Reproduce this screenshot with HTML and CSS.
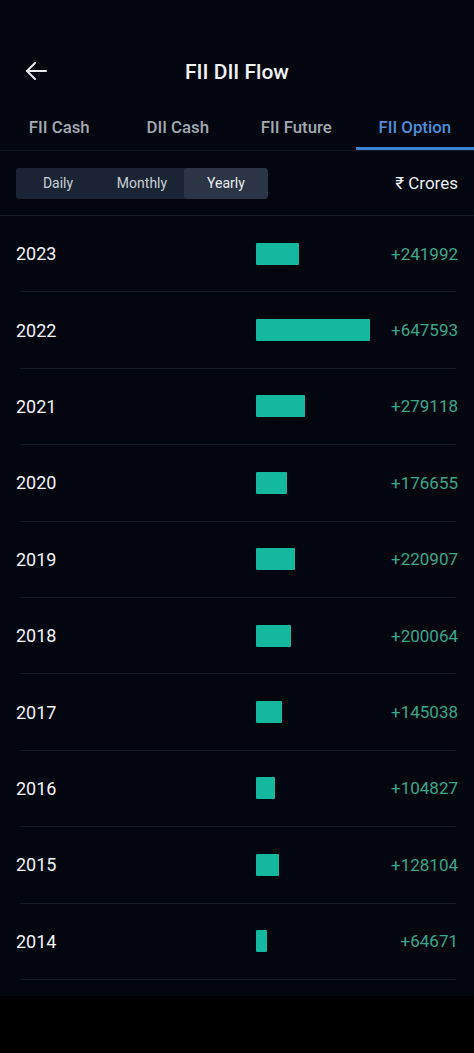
FILE: index.html
```html
<!DOCTYPE html>
<html lang="en">
<head>
  <meta charset="UTF-8" />
  <meta name="viewport" content="width=device-width, initial-scale=1.0" />
  <title>FII DII Flow</title>
  <link rel="stylesheet" href="styles.css">
</head>
<body>
  <div class="page">
    <header class="topbar">
      <button class="back" aria-label="Back">
        <svg width="22" height="20" viewBox="0 0 22 20" fill="none" stroke="#e8ebef" stroke-width="2" stroke-linecap="round" stroke-linejoin="round">
          <path d="M21 10H2" />
          <path d="M10 2L2 10l8 8" />
        </svg>
      </button>
      <h1>FII DII Flow</h1>
    </header>

    <nav class="tabs">
      <a href="#">FII Cash</a>
      <a href="#">DII Cash</a>
      <a href="#">FII Future</a>
      <a href="#" class="active">FII Option</a>
    </nav>

    <div class="toolbar">
      <div class="segments">
        <span>Daily</span>
        <span>Monthly</span>
        <span class="selected">Yearly</span>
      </div>
      <div class="unit">₹ Crores</div>
    </div>

    <main class="list">
      <div class="row"><div class="cells"><span class="year">2023</span><span class="track"><i class="bar" style="width: 42.6px"></i></span><span class="value">+241992</span></div></div>
      <div class="row"><div class="cells"><span class="year">2022</span><span class="track"><i class="bar" style="width: 114px"></i></span><span class="value">+647593</span></div></div>
      <div class="row"><div class="cells"><span class="year">2021</span><span class="track"><i class="bar" style="width: 49.1px"></i></span><span class="value">+279118</span></div></div>
      <div class="row"><div class="cells"><span class="year">2020</span><span class="track"><i class="bar" style="width: 31.1px"></i></span><span class="value">+176655</span></div></div>
      <div class="row"><div class="cells"><span class="year">2019</span><span class="track"><i class="bar" style="width: 38.9px"></i></span><span class="value">+220907</span></div></div>
      <div class="row"><div class="cells"><span class="year">2018</span><span class="track"><i class="bar" style="width: 35.2px"></i></span><span class="value">+200064</span></div></div>
      <div class="row"><div class="cells"><span class="year">2017</span><span class="track"><i class="bar" style="width: 25.5px"></i></span><span class="value">+145038</span></div></div>
      <div class="row"><div class="cells"><span class="year">2016</span><span class="track"><i class="bar" style="width: 18.5px"></i></span><span class="value">+104827</span></div></div>
      <div class="row"><div class="cells"><span class="year">2015</span><span class="track"><i class="bar" style="width: 22.6px"></i></span><span class="value">+128104</span></div></div>
      <div class="row"><div class="cells"><span class="year">2014</span><span class="track"><i class="bar" style="width: 11.4px"></i></span><span class="value">+64671</span></div></div>
    </main>
  </div>
</body>
</html>
```

FILE: styles.css
```css
html {
  background-color: #000;
}
body {
  margin: 0;
  padding: 0;
  font-family: Roboto, 'Noto Sans', sans-serif;
  background-color: #000;
  color: #eef0f3;
}
.page {
  background-color: #03060f;
  padding-top: 44px;
  padding-bottom: 16px;
}
.topbar {
  height: 56px;
  display: flex;
  align-items: center;
  justify-content: center;
  position: relative;
}
.topbar h1 {
  margin: 0;
  font-size: 21px;
  font-weight: 500;
  color: #f1f3f5;
}
.back {
  position: absolute;
  left: 25px;
  top: 17px;
  background: none;
  border: none;
  padding: 0;
  display: flex;
}
.tabs {
  display: flex;
  height: 50px;
  border-bottom: 1px solid #131a25;
}
.tabs a {
  flex: 1;
  display: flex;
  align-items: center;
  justify-content: center;
  padding-top: 7px;
  font-size: 16.8px;
  font-weight: 500;
  color: #a3a9b2;
  text-decoration: none;
  border-bottom: 3px solid transparent;
}
.tabs a.active {
  color: #4b8fdc;
  border-bottom-color: #3d83d6;
}
.toolbar {
  height: 64px;
  display: flex;
  align-items: center;
  justify-content: space-between;
  padding: 0 16px;
  border-bottom: 1px solid #141b26;
}
.segments {
  display: flex;
  height: 31px;
  background: #1a2434;
  border-radius: 3px;
  overflow: hidden;
}
.segments span {
  width: 84px;
  display: flex;
  align-items: center;
  justify-content: center;
  font-size: 14px;
  color: #c9cfd7;
}
.segments span.selected {
  background: #2b3546;
  color: #e9ecf0;
  border-radius: 3px;
}
.unit {
  font-size: 17px;
  color: #eef0f3;
}
.row {
  height: 76.4px;
  margin: 0 18px 0 20px;
  border-bottom: 1px solid #151b26;
  box-sizing: border-box;
}
.cells {
  display: grid;
  grid-template-columns: 240px 1fr auto;
  align-items: center;
  height: 100%;
  margin: 0 -2px 0 -4px;
}
.year {
  font-size: 18px;
  color: #f3f4f6;
}
.track {
  display: flex;
  align-items: center;
}
.bar {
  display: block;
  height: 22px;
  background: #14b89f;
  border-radius: 1px;
}
.value {
  font-size: 17px;
  color: #3aa68c;
  text-align: right;
}
```
